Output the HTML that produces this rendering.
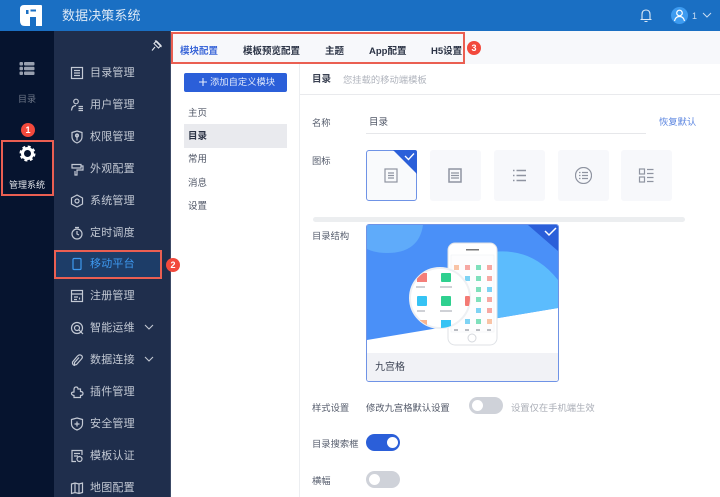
<!DOCTYPE html>
<html lang="zh"><head><meta charset="utf-8"><style>
*{box-sizing:border-box}
html,body{margin:0;padding:0;background:#fff}
body{width:720px;height:497px;overflow:hidden;position:relative;font-family:"Liberation Sans","Noto Sans CJK SC",sans-serif}
#w{position:absolute;left:0;top:0;width:720px;height:497px;overflow:hidden;filter:blur(.35px);background:#fff}
.a{position:absolute;white-space:nowrap}
.m{position:absolute;left:90px;font-size:11px;line-height:16px;color:#c3c9d4;letter-spacing:.2px}
.ic{position:absolute;left:70px;width:14px;height:14px;fill:none;stroke:#c3c9d4;stroke-width:1.2}
.t{position:absolute;top:45px;font-size:9.5px;line-height:14px;font-weight:bold;color:#2b3345}
.n{position:absolute;left:188px;font-size:9.5px;line-height:14px;color:#4f5666}
.l{position:absolute;left:312px;font-size:9.3px;line-height:14px;color:#565d6d}
.tile{position:absolute;top:150px;width:51px;height:51px;background:#f7f8fb;border-radius:3px}
.tile svg{position:absolute;left:17px;top:17px;width:17px;height:17px;fill:none;stroke:#8f94a1;stroke-width:1.2}
.b{position:absolute;width:14px;height:14px;border-radius:50%;background:#f2493c;color:#fff;font-size:9px;font-weight:bold;text-align:center;line-height:14px}
.red{position:absolute;border:2px solid #ea5f52}
.sw{position:absolute;width:34px;height:17px;border-radius:9px;background:#cfd2d9}
.sw i{position:absolute;left:3px;top:3px;width:11px;height:11px;border-radius:50%;background:#fff}
</style></head><body><div id="w">
<div class="a" style="left:0;top:0;width:720px;height:31px;background:#1a6fc3"></div>
<svg class="a" style="left:20px;top:5px" width="22" height="22" viewBox="0 0 22 22"><path fill="#fff" fill-rule="evenodd" d="M4 0H21Q22 0 22 1V21H16V12H10V21H5Q0 21 0 16V4Q0 0 4 0ZM6 5V9H8.500V5ZM10.500 4.500V6.500H16V4.500Z"/></svg>
<div class="a" style="left:62px;top:7px;font-size:13px;line-height:18px;color:#dbe8f6;letter-spacing:.1px">数据决策系统</div>
<svg class="a" style="left:639px;top:8px" width="14" height="15" viewBox="0 0 14 15" fill="none" stroke="#dce8f5" stroke-width="1.100"><path d="M1.500 11.500H12.500M3 11.500V6.500Q3 2 7 2T11 6.500V11.500M5.500 13.500H8.500"/></svg>
<div class="a" style="left:671px;top:7px;width:17px;height:17px;border-radius:50%;background:#3d9bf0"></div>
<svg class="a" style="left:671px;top:7px" width="17" height="17" viewBox="0 0 17 17" fill="none" stroke="#fff" stroke-width="1.200"><circle cx="8.500" cy="6" r="2.800"/><path d="M3.500 14Q4.500 9.500 8.500 9.500T13.500 14"/></svg>
<div class="a" style="left:692px;top:10px;font-size:9px;line-height:12px;color:#c9dcf1">1</div>
<svg class="a" style="left:702px;top:12px" width="10" height="7" viewBox="0 0 10 7" fill="none" stroke="#c9dcf1"><path d="M1 1L5 5L9 1"/></svg>

<div class="a" style="left:0;top:31px;width:54px;height:466px;background:#06142f"></div>
<div class="a" style="left:54px;top:31px;width:117px;height:466px;background:#1f2e4c;border-right:1px solid #3c4a66"></div>

<svg class="a" style="left:19px;top:61px" width="16" height="15" viewBox="0 0 16 15" fill="#98a0af"><rect x="0.500" y="1" width="3.500" height="3.500" rx="1"/><rect x="5" y="1" width="10.500" height="3.500" rx="1"/><rect x="0.500" y="5.800" width="3.500" height="3.500" rx="1"/><rect x="5" y="5.800" width="10.500" height="3.500" rx="1"/><rect x="0.500" y="10.500" width="3.500" height="3.500" rx="1"/><rect x="5" y="10.500" width="10.500" height="3.500" rx="1"/></svg>
<div class="a" style="left:18px;top:93px;font-size:9px;line-height:13px;color:#6f7889">目录</div>
<div class="red" style="left:1px;top:140px;width:53px;height:56px"></div>
<svg class="a" style="left:19px;top:145px" width="17" height="17" viewBox="0 0 17 17"><circle cx="8.500" cy="8.500" r="5" fill="none" stroke="#fff" stroke-width="3"/><circle cx="8.500" cy="8.500" r="7" fill="none" stroke="#fff" stroke-width="2" stroke-dasharray="3 2.500"/></svg>
<div class="a" style="left:9px;top:179px;font-size:9px;line-height:13px;color:#e2e5ea">管理系统</div>
<div class="b" style="left:21px;top:123px">1</div>

<svg class="a" style="left:150px;top:39px" width="13" height="13" viewBox="0 0 13 13" fill="none" stroke="#dfe3ea" stroke-width="1.100"><path d="M6.500 2L11 6.500L8.500 9L4 4.500ZM5 1.500L11.500 8M5 8L2 11.500"/></svg>

<svg class="ic" style="top:66px" viewBox="0 0 14 14"><rect x="1.500" y="1.500" width="11" height="11"/><path d="M4 4.500H10M4 7H10M4 9.500H10"/></svg><div class="m" style="top:65px">目录管理</div>
<svg class="ic" style="top:98px" viewBox="0 0 14 14"><circle cx="6" cy="3.500" r="2.300"/><path d="M1.500 12.500Q2 7.500 6 7.500M8.500 8.500H13M8.500 10.500H13M8.500 12.500H13"/></svg><div class="m" style="top:97px">用户管理</div>
<svg class="ic" style="top:130px" viewBox="0 0 14 14"><path d="M7 1L12 2.500V7Q12 11 7 13Q2 11 2 7V2.500ZM7 3.500V10.500"/><circle cx="7" cy="5.500" r="1.500"/></svg><div class="m" style="top:129px">权限管理</div>
<svg class="ic" style="top:162px" viewBox="0 0 14 14"><path d="M2 2.500H11V6H2ZM11 4H13V8H7V13H5V9"/></svg><div class="m" style="top:161px">外观配置</div>
<svg class="ic" style="top:194px" viewBox="0 0 14 14"><path d="M7 1L12.500 4V10L7 13L1.500 10V4Z"/><circle cx="7" cy="7" r="2"/></svg><div class="m" style="top:193px">系统管理</div>
<svg class="ic" style="top:226px" viewBox="0 0 14 14"><circle cx="7" cy="8" r="5"/><path d="M5 1.500H9M7 5V8L9 9"/></svg><div class="m" style="top:225px">定时调度</div>

<div class="a" style="left:54px;top:250px;width:108px;height:29px;background:#1d3d68;border:2px solid #ea5f52"></div>
<svg class="ic" style="top:257px;stroke:#3e98ee" viewBox="0 0 14 14"><rect x="3" y="1.500" width="8" height="11" rx="1"/></svg><div class="m" style="top:256px;color:#3e98ee">移动平台</div>
<div class="b" style="left:166px;top:258px">2</div>

<svg class="ic" style="top:289px" viewBox="0 0 14 14"><rect x="1.500" y="1.500" width="11" height="11"/><path d="M1.500 5H12.500M4 8H8M4 10.500H7M9.500 8.500V10.500"/></svg><div class="m" style="top:288px">注册管理</div>
<svg class="ic" style="top:321px" viewBox="0 0 14 14"><circle cx="7" cy="7" r="5.500"/><circle cx="7" cy="7" r="2.500"/><path d="M9 9L13 13"/></svg><div class="m" style="top:320px">智能运维</div>
<svg class="a" style="left:144px;top:324px" width="10" height="7" viewBox="0 0 10 7" fill="none" stroke="#c3c9d4" stroke-width="1.100"><path d="M1 1L5 5L9 1"/></svg>
<svg class="ic" style="top:353px" viewBox="0 0 14 14"><path d="M5 12.500Q2 12 2.500 9L7.500 3Q9.500 1 11.500 2.500T11 6.500L6.500 11.500Q5 12.500 4.500 11T5.500 8.500L9 4.500"/></svg><div class="m" style="top:352px">数据连接</div>
<svg class="a" style="left:144px;top:356px" width="10" height="7" viewBox="0 0 10 7" fill="none" stroke="#c3c9d4" stroke-width="1.100"><path d="M1 1L5 5L9 1"/></svg>
<svg class="ic" style="top:385px" viewBox="0 0 14 14"><path d="M4 4.500Q4 2 6 2T8 4H10.500V6.500Q13 6.500 13 8.500T10.500 10.500V12.500H4V10.500Q1.500 10 1.500 8.500T4 7Z"/></svg><div class="m" style="top:384px">插件管理</div>
<svg class="ic" style="top:417px" viewBox="0 0 14 14"><path d="M7 1L12.500 2.500V7Q12.500 11 7 13Q1.500 11 1.500 7V2.500ZM7 4.500V9.500M4.500 7H9.500"/></svg><div class="m" style="top:416px">安全管理</div>
<svg class="ic" style="top:449px" viewBox="0 0 14 14"><path d="M6 12.500H2V1.500H12V6M4 4.500H10M4 7H8"/><circle cx="9.500" cy="10" r="2.500"/></svg><div class="m" style="top:448px">模板认证</div>
<svg class="ic" style="top:481px" viewBox="0 0 14 14"><path d="M1.500 3L5 2L9 3L12.500 2V11.500L9 12.500L5 11.500L1.500 12.500ZM5 2V11.500M9 3V12.500"/></svg><div class="m" style="top:480px">地图配置</div>

<div class="a" style="left:171px;top:31px;width:549px;height:33px;background:#f7f8fb"></div>
<div class="t" style="left:180px;color:#3a66d8">模块配置</div>
<div class="t" style="left:243px">模板预览配置</div>
<div class="t" style="left:325px">主题</div>
<div class="t" style="left:369px">App配置</div>
<div class="t" style="left:431px">H5设置</div>
<div class="red" style="left:171px;top:32px;width:294px;height:32px"></div>
<div class="b" style="left:467px;top:41px">3</div>

<div class="a" style="left:299px;top:64px;width:1px;height:433px;background:#eceef1"></div>
<div class="a" style="left:300px;top:94px;width:420px;height:1px;background:#e9eaed"></div>
<div class="a" style="left:184px;top:73px;width:103px;height:19px;background:#2b5fd9;border-radius:2px"></div>
<svg class="a" style="left:198px;top:77px" width="10" height="10" viewBox="0 0 10 10" stroke="#e6edfc" stroke-width="1.100"><path d="M1 5H9M5 1V9"/></svg>
<div class="a" style="left:210px;top:75px;font-size:9.3px;line-height:15px;color:#dfe8fb">添加自定义模块</div>
<div class="n" style="top:107px">主页</div>
<div class="a" style="left:184px;top:124px;width:103px;height:24px;background:#e9eaee"></div>
<div class="n" style="top:130px;color:#2b3345;font-weight:bold">目录</div>
<div class="n" style="top:153px">常用</div>
<div class="n" style="top:177px">消息</div>
<div class="n" style="top:200px">设置</div>

<div class="a" style="left:312px;top:73px;font-size:9.5px;line-height:14px;font-weight:bold;color:#3a4152">目录</div>
<div class="a" style="left:343px;top:73px;font-size:9.3px;line-height:14px;color:#b0b4bd">您挂载的移动端模板</div>

<div class="l" style="top:116px">名称</div>
<div class="a" style="left:369px;top:116px;font-size:9.5px;line-height:14px;color:#4f5666">目录</div>
<div class="a" style="left:366px;top:133px;width:280px;height:1px;background:#e6e7ea"></div>
<div class="a" style="left:659px;top:115px;font-size:9.3px;line-height:14px;color:#5b85e0">恢复默认</div>
<div class="l" style="top:154px">图标</div>

<div class="tile" style="left:366px;border:1px solid #6f93e6;background:#f9fafc">
<svg style="left:16px;top:16px" viewBox="0 0 17 17"><rect x="2" y="2" width="12" height="13"/><path d="M5 6H11M5 8.500H11M5 11H11" /></svg></div>
<svg class="a" style="left:393px;top:150px" width="25" height="25" viewBox="0 0 25 25"><path d="M0 0H22Q24 0 24 2V24Z" fill="#2b5fd9"/><path d="M12 6L15.500 9.500L21 3.500" fill="none" stroke="#fff" stroke-width="1.300"/></svg>
<div class="tile" style="left:430px"><svg viewBox="0 0 17 17"><rect x="2" y="2" width="12" height="13" stroke-width="1.500"/><path d="M4 6H12M4 8.500H12M4 11H12"/></svg></div>
<div class="tile" style="left:494px"><svg viewBox="0 0 17 17"><path d="M5.500 3.500H15M5.500 8.500H15M5.500 13.500H15M2 3.500H3.500M2 8.500H3.500M2 13.500H3.500" stroke-width="1.400"/></svg></div>
<div class="tile" style="left:558px"><svg viewBox="0 0 17 17"><circle cx="8.500" cy="8.500" r="8"/><path d="M7 5.500H13M7 8.500H13M7 11.500H13M4 5.500H5.500M4 8.500H5.500M4 11.500H5.500"/></svg></div>
<div class="tile" style="left:621px"><svg viewBox="0 0 17 17"><rect x="1.500" y="2" width="5" height="5"/><rect x="1.500" y="10" width="5" height="5"/><path d="M9 2.500H15.500M9 6.500H15.500M9 10.500H15.500M9 14.500H15.500"/></svg></div>

<div class="a" style="left:313px;top:217px;width:372px;height:5px;border-radius:3px;background:#eceef0"></div>

<div class="l" style="top:229px">目录结构</div>
<div class="a" style="left:366px;top:224px;width:193px;height:158px;border:1px solid #6f93e6;border-radius:3px;overflow:hidden;background:#fff">
<svg width="191" height="128" viewBox="0 0 191 128" style="position:absolute;left:0;top:0">
<rect width="191" height="128" fill="#fff"/>
<path d="M0 0H191V83L0 115Z" fill="#4a90f8"/>
<path d="M0 0H56Q52 28 20 28Q8 28 0 24Z" fill="#5fabfa"/>
<path d="M125 27Q165 22 191 55V83L125 94Z" fill="#5cbcfd"/>
<path d="M161 0H191V26Z" fill="#2b5fd9"/>
<path d="M178 6L182 10L189 3" fill="none" stroke="#fff" stroke-width="1.500"/>
<rect x="81" y="18" width="49" height="102" rx="7" fill="#fff" stroke="#dfe2e6"/>
<rect x="84" y="30" width="43" height="77" fill="#fdfdfe" stroke="#eef0f2" stroke-width=".5"/>
<circle cx="105" cy="113" r="4" fill="none" stroke="#d5d8dd"/>
<rect x="99" y="24" width="13" height="1.500" fill="#777"/>
<g>
<rect x="87" y="40" width="5" height="5" fill="#f9c4a6"/><rect x="98" y="40" width="5" height="5" fill="#f6a8a3"/><rect x="109" y="40" width="5" height="5" fill="#7fe0bc"/><rect x="120" y="40" width="5" height="5" fill="#f6a8a3"/>
<rect x="98" y="51" width="5" height="5" fill="#7ed3f4"/><rect x="109" y="51" width="5" height="5" fill="#7fe0bc"/><rect x="120" y="51" width="5" height="5" fill="#f6a8a3"/>
<rect x="109" y="62" width="5" height="5" fill="#7fe0bc"/><rect x="120" y="62" width="5" height="5" fill="#7ed3f4"/>
<rect x="109" y="72" width="5" height="5" fill="#7fe0bc"/><rect x="120" y="72" width="5" height="5" fill="#f6a8a3"/>
<rect x="109" y="83" width="5" height="5" fill="#7ed3f4"/><rect x="120" y="83" width="5" height="5" fill="#f6a8a3"/>
<rect x="98" y="94" width="5" height="5" fill="#7ed3f4"/><rect x="109" y="94" width="5" height="5" fill="#7fe0bc"/><rect x="120" y="94" width="5" height="5" fill="#f9c4a6"/>
<path d="M87 105H91M98 105H102M109 105H113M120 105H124" stroke="#b9bcc2" stroke-width="2"/>
</g>
<circle cx="73" cy="73" r="30" fill="#fff" stroke="#eef0f3" stroke-width="2"/>
<clipPath id="c"><circle cx="73" cy="73" r="30"/></clipPath>
<g clip-path="url(#c)">
<rect x="50" y="48" width="10" height="9" fill="#f47f7a"/>
<rect x="74" y="48" width="10" height="9" rx="1" fill="#2fd08f"/>
<rect x="50" y="71" width="10" height="10" rx="1" fill="#36c3f4"/>
<rect x="74" y="71" width="10" height="10" rx="1" fill="#2fd08f"/>
<rect x="98" y="71" width="5" height="10" rx="1" fill="#f47a74"/>
<rect x="52" y="95" width="8" height="8" fill="#f9b48e"/>
<rect x="74" y="95" width="10" height="8" fill="#36c3f4"/>
<path d="M49 62H58M73 62H85M50 86H58M73 86H85" stroke="#bfc2c8" stroke-width="1.500"/>
</g>
</svg>
<div style="position:absolute;left:0;top:128px;width:191px;height:28px;background:#f1f2f6;color:#3a4152;font-size:10px;line-height:30px;padding-left:8px">九宫格</div>
</div>

<div class="l" style="top:401px">样式设置</div>
<div class="a" style="left:366px;top:401px;font-size:9.3px;line-height:14px;color:#4f5666">修改九宫格默认设置</div>
<div class="sw" style="left:469px;top:397px"><i></i></div>
<div class="a" style="left:511px;top:401px;font-size:9.3px;line-height:14px;color:#a9adb6">设置仅在手机端生效</div>
<div class="l" style="top:437px">目录搜索框</div>
<div class="sw" style="left:366px;top:434px;background:#2b5fd9"><i style="left:21px"></i></div>
<div class="l" style="top:474px">横幅</div>
<div class="sw" style="left:366px;top:471px"><i></i></div>
</div></body></html>
